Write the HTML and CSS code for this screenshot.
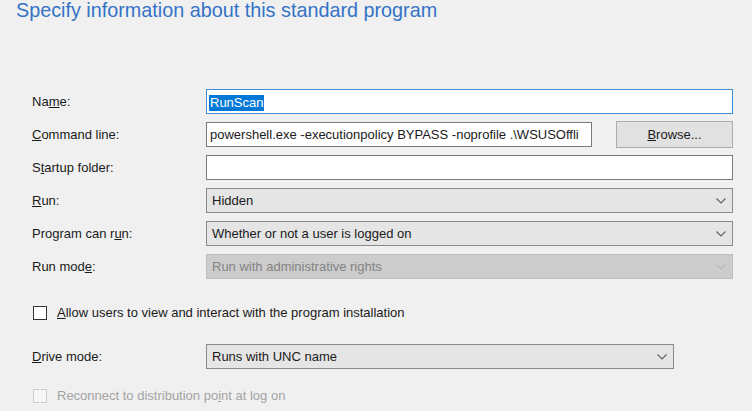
FILE: index.html
```html
<!DOCTYPE html>
<html lang="en">
<head>
    <meta charset="UTF-8">
    <title>Standard Program</title>
    <link rel="stylesheet" href="styles.css">
</head>
<body>
    <h1 class="title">Specify information about this standard program</h1>

    <div class="form">
        <label class="lbl">Na<u>m</u>e:</label>
        <div class="field focus"><span class="sel">RunScan</span></div>

        <label class="lbl"><u>C</u>ommand line:</label>
        <div class="cmd">
            <div class="field clip">powershell.exe -executionpolicy BYPASS -noprofile .\WSUSOffli</div>
            <button class="btn"><u>B</u>rowse...</button>
        </div>

        <label class="lbl">S<u>t</u>artup folder:</label>
        <div class="field"></div>

        <label class="lbl"><u>R</u>un:</label>
        <div class="combo">
            <span>Hidden</span>
            <svg class="chev" width="10" height="6" viewBox="0 0 10 6"><path d="M0.5 0.5 L5 5 L9.5 0.5" fill="none" stroke="currentColor" stroke-width="1.1"/></svg>
        </div>

        <label class="lbl">Program can r<u>u</u>n:</label>
        <div class="combo">
            <span>Whether or not a user is logged on</span>
            <svg class="chev" width="10" height="6" viewBox="0 0 10 6"><path d="M0.5 0.5 L5 5 L9.5 0.5" fill="none" stroke="currentColor" stroke-width="1.1"/></svg>
        </div>

        <label class="lbl">Run mod<u>e</u>:</label>
        <div class="combo off">
            <span>Run with administrative rights</span>
            <svg class="chev" width="10" height="6" viewBox="0 0 10 6"><path d="M0.5 0.5 L5 5 L9.5 0.5" fill="none" stroke="currentColor" stroke-width="1.1"/></svg>
        </div>
    </div>

    <div class="check">
        <span class="box"></span>
        <span><u>A</u>llow users to view and interact with the program installation</span>
    </div>

    <div class="form drive">
        <label class="lbl"><u>D</u>rive mode:</label>
        <div class="combo">
            <span>Runs with UNC name</span>
            <svg class="chev" width="10" height="6" viewBox="0 0 10 6"><path d="M0.5 0.5 L5 5 L9.5 0.5" fill="none" stroke="currentColor" stroke-width="1.1"/></svg>
        </div>
    </div>

    <div class="check off last">
        <span class="box"></span>
        <span>Reconnect to distribution po<u>i</u>nt at log on</span>
    </div>
</body>
</html>
```

FILE: styles.css
```css
body{
    margin: 0;
    background: #f0f0f0;
    font-family: "Liberation Sans", Arial, sans-serif;
    font-size: 13px;
    color: #1a1a1a;
    width: 752px;
    height: 411px;
    overflow: hidden;
}
.title{
    margin: 0 0 0 16px;
    font-size: 19.8px;
    line-height: 20px;
    font-weight: normal;
    color: #3473c6;
}
.form{
    display: grid;
    grid-template-columns: 174px 1fr;
    grid-auto-rows: 25px;
    row-gap: 8px;
    margin: 69px 19px 0 32px;
    align-items: center;
}
.lbl{
    line-height: 16px;
}
.field{
    height: 25px;
    box-sizing: border-box;
    background: #fff;
    border: 1px solid #7a7a7a;
    padding: 0 3px;
    line-height: 23px;
    white-space: nowrap;
}
.field.focus{
    border-color: #3d8fd6;
    padding-left: 2px;
}
.sel{
    display: inline-block;
    background: #0078d7;
    color: #fff;
    line-height: 16px;
    padding: 0 1px;
    vertical-align: middle;
}
.clip{
    overflow: hidden;
    flex: 1;
}
.cmd{
    display: flex;
    align-items: center;
    gap: 24px;
}
.btn{
    width: 117px;
    height: 27px;
    background: #e1e1e1;
    border: 1px solid #adadad;
    font-family: inherit;
    font-size: 13px;
    color: #1a1a1a;
    padding: 0;
}
.combo{
    height: 25px;
    box-sizing: border-box;
    display: flex;
    align-items: center;
    justify-content: space-between;
    background: #e5e5e5;
    border: 1px solid #8a8a8a;
    padding: 0 6px 0 5px;
}
.chev{
    color: #606060;
}
.combo.off{
    background: #cccccc;
    border-color: #bfbfbf;
    color: #838383;
}
.combo.off .chev{
    color: #b8b8b8;
}
.check{
    display: flex;
    align-items: center;
    gap: 10px;
    margin: 27px 0 0 33px;
    line-height: 14px;
}
.box{
    width: 14px;
    height: 14px;
    box-sizing: border-box;
    background: #fff;
    border: 1px solid #333;
}
.drive{
    margin-top: 24px;
    width: 642px;
}
.check.off{
    color: #a3a3a3;
}
.check.off .box{
    background: #f7f7f7;
    border-color: #cccccc;
}
.last{
    margin-top: 20px;
}
```
